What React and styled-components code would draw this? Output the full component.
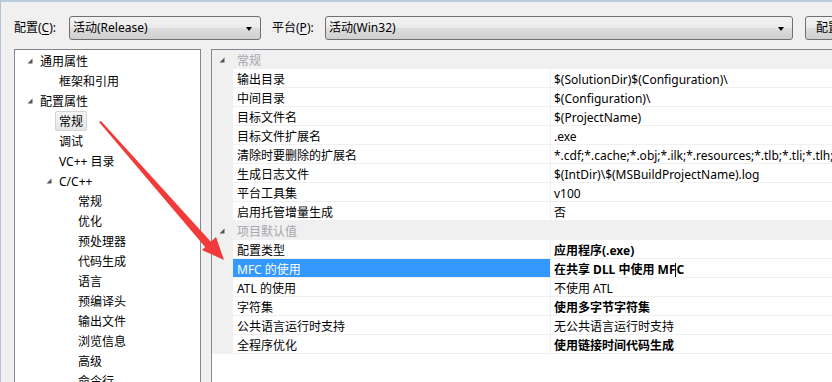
import styled, { createGlobalStyle } from "styled-components";

const GlobalStyle = createGlobalStyle`
  html, body {
    margin: 0;
    padding: 0;
    background: #f0f0f0;
    overflow: hidden;
  }
  body {
    font-family: "Noto Sans", "Noto Sans CJK SC", sans-serif;
    font-size: 12px;
    color: #000;
  }
`;

const Window = styled.div`
   position:         relative;
   width:            832px;
   height:           382px;
   box-sizing:       border-box;
   border-top:       2px solid #bccbdc;
   border-left:      1px solid #b3c4d8;
   overflow:         hidden;
   background:       #f0f0f0;
`;

const Toolbar = styled.div`
   display:          flex;
   align-items:      center;
   height:           24px;
   padding:          14px 0 0 13px;
   white-space:      nowrap;
`;

const Label = styled.div`
   width:            ${p => p.$w}px;
   margin-left:      ${p => p.$ml || 0}px;
   line-height:      24px;
   flex-shrink:      0;
   u { text-decoration: underline; text-underline-offset: 2px; }
`;

const Select = styled.div`
   position:         relative;
   flex-shrink:      0;
   width:            ${p => p.$w}px;
   height:           24px;
   box-sizing:       border-box;
   border:           1px solid #707070;
   border-radius:    3px;
   background:       linear-gradient(#f2f2f2 0%, #ebebeb 48%, #dddddd 52%, #cfcfcf 100%);
   padding-left:     3px;
   line-height:      22px;
   &:after {
      content:          "";
      position:         absolute;
      right:            8px;
      top:              10px;
      border-left:      3.5px solid transparent;
      border-right:     3.5px solid transparent;
      border-top:       4px solid #000;
   }
`;

const Button = styled.div`
   flex-shrink:      0;
   margin-left:      12px;
   width:            120px;
   height:           24px;
   box-sizing:       border-box;
   border:           1px solid #707070;
   border-radius:    3px;
   background:       linear-gradient(#f2f2f2 0%, #ebebeb 48%, #dddddd 52%, #cfcfcf 100%);
   padding-left:     10px;
   line-height:      22px;
`;

const Panels = styled.div`
   display:          flex;
   gap:              10px;
   margin-top:       9px;
   padding-left:     13px;
   height:           340px;
`;

const Tree = styled.div`
   width:            187px;
   flex-shrink:      0;
   box-sizing:       border-box;
   border:           1px solid #828790;
   background:       #fff;
   padding-top:      1px;
`;

const TreeRow = styled.div`
   display:          flex;
   align-items:      center;
   height:           20px;
   padding-left:     ${p => 10 + p.$level * 19}px;
`;

const Toggle = styled.div`
   width:            15px;
   height:           20px;
   display:          flex;
   align-items:      center;
   padding-left:     2px;
   box-sizing:       border-box;
`;

const TreeLabel = styled.span`
   margin-left:      -4px;
   box-sizing:       border-box;
   height:           20px;
   padding:          1px 3px 0;
   line-height:      18px;
   border:           1px solid ${p => (p.$active ? "#d4d4d4" : "transparent")};
   border-radius:    2px;
   background:       ${p => (p.$active ? "linear-gradient(#f4f4f4, #e6e6e6)" : "transparent")};
`;

const Grid = styled.div`
   flex:             1;
   margin-right:     -20px;
   border:           1px solid #828790;
   background:       #fff;
`;

const Row = styled.div`
   display:          flex;
   height:           19px;
   line-height:      18px;
   background:       ${p => (p.$header ? "#f0f0f0" : "#fff")};
   color:            ${p => (p.$header ? "#a5a7ad" : "#000")};
`;

const Margin = styled.div`
   width:            21px;
   flex-shrink:      0;
   background:       #f0f0f0;
   display:          flex;
   align-items:      center;
   padding-left:     7px;
   box-sizing:       border-box;
`;

const NameCell = styled.div`
   width:            318px;
   flex-shrink:      0;
   box-sizing:       border-box;
   padding:          2px 0 0 4px;
   border-bottom:    1px solid #f0f0f0;
   border-right:     1px solid #f0f0f0;
   background:       ${p => (p.$selected ? "#3399ff" : "transparent")};
   color:            ${p => (p.$selected ? "#fff" : "inherit")};
   white-space:      nowrap;
   overflow:         hidden;
`;

const ValueCell = styled.div`
   flex:             1;
   box-sizing:       border-box;
   padding:          2px 0 0 3px;
   border-bottom:    1px solid #f0f0f0;
   font-weight:      ${p => (p.$bold ? 700 : 400)};
   white-space:      nowrap;
   overflow:         hidden;
`;

const HeaderTitle = styled.div`
   padding:          2px 0 0 4px;
`;

const Caret = styled.span`
   display:          inline-block;
   width:            0;
   height:           14px;
   border-left:      1px solid #000;
   vertical-align:   -3px;
`;

const Overlay = styled.svg`
   position:         absolute;
   left:             0;
   top:              0;
   pointer-events:   none;
`;

const Expanded = () => (
   <svg width="6" height="6" viewBox="0 0 6 6">
      <polygon points="5.5,0.5 5.5,5.5 0.5,5.5" fill="#555" />
   </svg>
);

const treeItems = [
   { level: 0, label: "通用属性", open: true },
   { level: 1, label: "框架和引用" },
   { level: 0, label: "配置属性", open: true },
   { level: 1, label: "常规", active: true },
   { level: 1, label: "调试" },
   { level: 1, label: "VC++ 目录" },
   { level: 1, label: "C/C++", open: true },
   { level: 2, label: "常规" },
   { level: 2, label: "优化" },
   { level: 2, label: "预处理器" },
   { level: 2, label: "代码生成" },
   { level: 2, label: "语言" },
   { level: 2, label: "预编译头" },
   { level: 2, label: "输出文件" },
   { level: 2, label: "浏览信息" },
   { level: 2, label: "高级" },
   { level: 2, label: "命令行" },
];

const sections = [
   {
      title: "常规",
      rows: [
         { name: "输出目录", value: "$(SolutionDir)$(Configuration)\\" },
         { name: "中间目录", value: "$(Configuration)\\" },
         { name: "目标文件名", value: "$(ProjectName)" },
         { name: "目标文件扩展名", value: ".exe" },
         { name: "清除时要删除的扩展名", value: "*.cdf;*.cache;*.obj;*.ilk;*.resources;*.tlb;*.tli;*.tlh;*.tmp;*.rsp;*.pgc;*.pgd;*.meta;$(TargetPath)" },
         { name: "生成日志文件", value: "$(IntDir)\\$(MSBuildProjectName).log" },
         { name: "平台工具集", value: "v100" },
         { name: "启用托管增量生成", value: "否" },
      ],
   },
   {
      title: "项目默认值",
      rows: [
         { name: "配置类型", value: "应用程序(.exe)", bold: true },
         { name: "MFC 的使用", value: <>在共享 DLL 中使用 MF<Caret />C</>, bold: true, selected: true },
         { name: "ATL 的使用", value: "不使用 ATL" },
         { name: "字符集", value: "使用多字节字符集", bold: true },
         { name: "公共语言运行时支持", value: "无公共语言运行时支持" },
         { name: "全程序优化", value: "使用链接时间代码生成", bold: true },
      ],
   },
];

export default function App() {
   return (
      <Window>
         <GlobalStyle />
         <Toolbar>
            <Label $w={55}>配置(<u>C</u>):</Label>
            <Select $w={192}>活动(Release)</Select>
            <Label $w={53} $ml={11}>平台(<u>P</u>):</Label>
            <Select $w={468}>活动(Win32)</Select>
            <Button>配置管理器(<u>O</u>)...</Button>
         </Toolbar>
         <Panels>
            <Tree>
               {treeItems.map((it, i) => (
                  <TreeRow key={i} $level={it.level}>
                     <Toggle>{it.open && <Expanded />}</Toggle>
                     <TreeLabel $active={it.active}>{it.label}</TreeLabel>
                  </TreeRow>
               ))}
            </Tree>
            <Grid>
               {sections.map(sec => (
                  <div key={sec.title}>
                     <Row $header>
                        <Margin><Expanded /></Margin>
                        <HeaderTitle>{sec.title}</HeaderTitle>
                     </Row>
                     {sec.rows.map(r => (
                        <Row key={r.name}>
                           <Margin />
                           <NameCell $selected={r.selected}>{r.name}</NameCell>
                           <ValueCell $bold={r.bold}>{r.value}</ValueCell>
                        </Row>
                     ))}
                  </div>
               ))}
            </Grid>
         </Panels>
         <Overlay width="832" height="382">
            <polygon points="98,120 100,119 211,241 205,246" fill="#f23a3a" />
            <polygon points="223,258 201,248 215,235" fill="#f23a3a" />
         </Overlay>
      </Window>
   );
}
